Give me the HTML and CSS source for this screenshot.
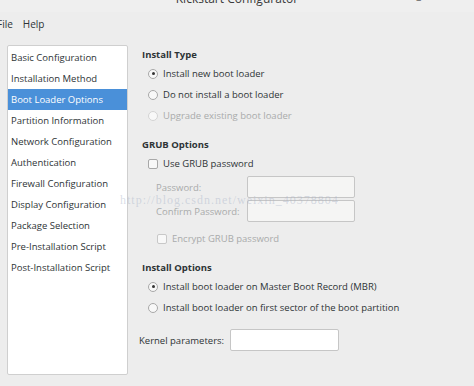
FILE: index.html
```html
<!DOCTYPE html>
<html lang="en">
<head>
    <meta charset="UTF-8">
    <title>Kickstart Configurator</title>
    <link rel="stylesheet" href="styles.css">
</head>
<body>
<div class="window">
    <!-- Title bar -->
    <div class="titlebar">
        <span class="title">Kickstart Configurator</span>
        <div class="controls">
            <span class="ctl">_</span>
            <span class="ctl ctl-max"></span>
            <span class="ctl">x</span>
        </div>
    </div>

    <!-- Menu -->
    <div class="menubar">
        <span class="menu-item file">File</span>
        <span class="menu-item">Help</span>
    </div>

    <div class="main">
        <!-- Section list -->
        <ul class="sidebar">
            <li>Basic Configuration</li>
            <li>Installation Method</li>
            <li class="selected">Boot Loader Options</li>
            <li>Partition Information</li>
            <li>Network Configuration</li>
            <li>Authentication</li>
            <li>Firewall Configuration</li>
            <li>Display Configuration</li>
            <li>Package Selection</li>
            <li>Pre-Installation Script</li>
            <li>Post-Installation Script</li>
        </ul>

        <!-- Boot loader page -->
        <div class="content">
            <h3 class="group-title">Install Type</h3>
            <div class="option"><span class="radio checked"></span>Install new boot loader</div>
            <div class="option"><span class="radio"></span>Do not install a boot loader</div>
            <div class="option disabled"><span class="radio"></span>Upgrade existing boot loader</div>

            <h3 class="group-title grub">GRUB Options</h3>
            <div class="option"><span class="check"></span>Use GRUB password</div>
            <div class="pw-grid">
                <label class="pw-label">Password:</label>
                <div class="field"></div>
                <label class="pw-label">Confirm Password:</label>
                <div class="field"></div>
            </div>
            <div class="option disabled encrypt"><span class="check"></span>Encrypt GRUB password</div>

            <h3 class="group-title opts">Install Options</h3>
            <div class="option"><span class="radio checked"></span>Install boot loader on Master Boot Record (MBR)</div>
            <div class="option"><span class="radio"></span>Install boot loader on first sector of the boot partition</div>

            <div class="kernel">
                <label>Kernel parameters:</label>
                <div class="field kernel-field"></div>
            </div>
        </div>
    </div>

    <div class="watermark">http://blog.csdn.net/weixin_40378804</div>
</div>
</body>
</html>
```

FILE: styles.css
```css
body {
    margin: 0;
    background: #ededed;
    font-family: "Open Sans", "DejaVu Sans", sans-serif;
    font-size: 9.5px;
    color: #2e3436;
}

.window {
    position: relative;
    width: 474px;
    height: 386px;
    overflow: hidden;
}

/* Barra de titulo */
.titlebar {
    height: 19px;
    position: relative;
    background: #efefef;
}

.title {
    display: block;
    text-align: center;
    font-size: 12px;
    line-height: 12px;
    margin-top: -7px;
    color: #3a3a3a;
}

.controls {
    position: absolute;
    right: 6px;
    top: -5px;
    display: flex;
    gap: 17px;
    font-size: 10px;
    color: #555;
}

.ctl-max {
    width: 6px;
    height: 6px;
    border: 1px solid #555;
    margin-top: 2px;
}

/* Menu */
.menubar {
    display: flex;
    gap: 10px;
    height: 24px;
    align-items: center;
    margin-left: -3px;
    font-size: 10px;
}

/* Lista de secciones */
.main {
    display: flex;
    padding: 9px 0 0 7px;
}

.sidebar {
    list-style: none;
    margin: 0;
    padding: 1px 0 0;
    width: 119px;
    height: 327px;
    background: #fff;
    border: 1px solid #cfcfcf;
    border-radius: 2px;
}

.sidebar li {
    height: 21px;
    line-height: 21px;
    padding-left: 3px;
    white-space: nowrap;
}

.sidebar li.selected {
    background: #4a90d9;
    color: #fff;
}

/* Contenido */
.content {
    padding: 1px 0 0 14px;
}

.group-title {
    margin: 0;
    font-size: 9.5px;
    font-weight: bold;
    height: 17px;
    line-height: 18px;
}

.group-title.grub {
    margin-top: 10px;
}

.group-title.opts {
    margin-top: 10px;
}

.option {
    display: flex;
    align-items: center;
    height: 21px;
    padding-left: 6px;
}

.option.disabled {
    color: #a9abab;
}

.radio {
    width: 8px;
    height: 8px;
    border: 1px solid #a8a8a8;
    border-radius: 50%;
    background: #f8f8f8;
    margin-right: 5px;
    position: relative;
}

.radio.checked::after {
    content: "";
    position: absolute;
    left: 2.5px;
    top: 2.5px;
    width: 3px;
    height: 3px;
    border-radius: 50%;
    background: #333;
}

.option.disabled .radio {
    border-color: #d4d4d4;
}

.check {
    width: 8px;
    height: 8px;
    border: 1px solid #a8a8a8;
    border-radius: 2px;
    background: #f8f8f8;
    margin-right: 5px;
}

.option.disabled .check {
    border-color: #c8c8c8;
}

.pw-grid {
    display: grid;
    grid-template-columns: 91px 108px;
    grid-auto-rows: 24px;
    align-items: center;
    padding-left: 14px;
    margin-top: 1px;
}

.pw-label {
    color: #a9abab;
}

.field {
    height: 22px;
    border: 1px solid #c6c6c6;
    border-radius: 2px;
    background: #f5f5f4;
    box-sizing: border-box;
}

.encrypt {
    padding-left: 15px;
    margin-top: 5px;
}

.kernel {
    display: flex;
    align-items: center;
    gap: 6px;
    margin: 11px 0 0 -3px;
}

.kernel-field {
    width: 109px;
    background: #fff;
}

.watermark {
    position: absolute;
    left: 120px;
    top: 193px;
    font-family: "Liberation Serif", serif;
    font-size: 12px;
    letter-spacing: 1px;
    color: rgba(170, 180, 200, 0.45);
}
```
